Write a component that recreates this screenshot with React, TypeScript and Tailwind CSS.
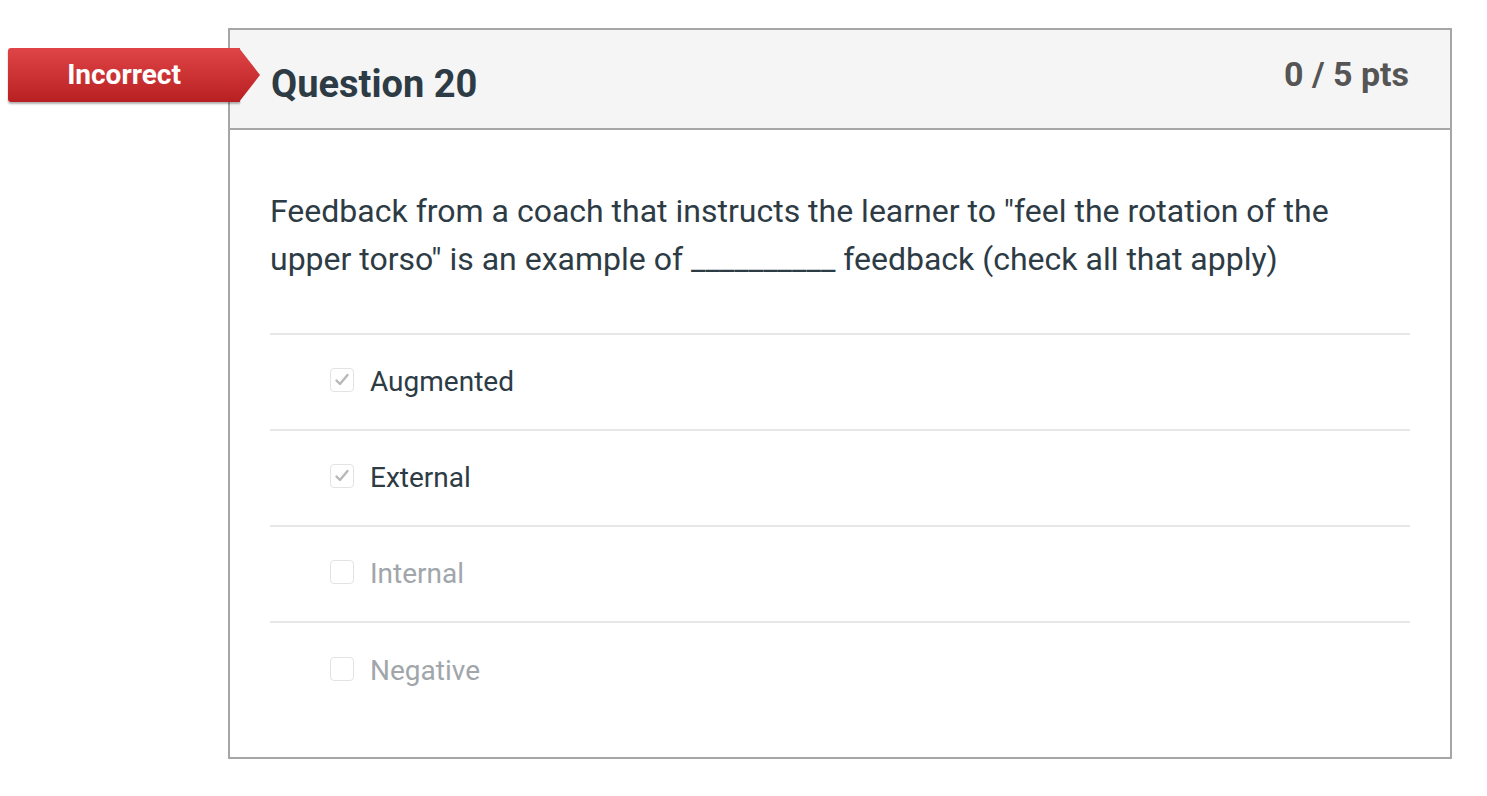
import React from "react";

const Check = () => (
  <svg width="20" height="20" viewBox="0 0 20 20" fill="none">
    <path d="M4.5 10.5 L8 14 L15.5 5" stroke="#b8b8b8" strokeWidth="2.4" strokeLinecap="round" strokeLinejoin="round" />
  </svg>
);

const Answer = ({ label, checked, last }: { label: string; checked: boolean; last?: boolean }) => (
  <div className={`flex h-[96px] items-center pl-[60px] ${last ? "" : "border-b-2 border-[#e6e6e6]"}`}>
    <div className="-mt-[4px] flex h-[24px] w-[24px] items-center justify-center rounded-[4px] border border-[#e3e3e3] bg-white">
      {checked ? <Check /> : null}
    </div>
    <span className={`ml-[16px] text-[28px] ${checked ? "text-[#2d3b45]" : "text-[#a0a6aa]"}`}>{label}</span>
  </div>
);

export default function App() {
  return (
    <div className="min-h-[796px] w-[1487px] bg-white" style={{ fontFamily: "Roboto, 'Liberation Sans', sans-serif" }}>
      <div className="relative pl-[228px] pt-[28px]">
        <div className="absolute left-[8px] top-[48px] z-10 flex h-[54px] items-center">
          <div className="flex h-[54px] w-[232px] items-center justify-center rounded-l-[3px] bg-gradient-to-b from-[#e04446] to-[#b81f22] shadow-[0_2px_2px_rgba(0,0,0,0.3)]">
            <span className="text-[28px] font-bold text-white">Incorrect</span>
          </div>
          <svg width="21" height="54" viewBox="0 0 21 54" className="-ml-px">
            <defs>
              <linearGradient id="g" x1="0" y1="0" x2="0" y2="1">
                <stop offset="0" stopColor="#e04446" />
                <stop offset="1" stopColor="#b81f22" />
              </linearGradient>
            </defs>
            <polygon points="0,0 0,54 21,27" fill="url(#g)" />
          </svg>
        </div>
        <div className="w-[1224px] border-2 border-[#a6a6a6]">
          <div className="flex h-[100px] items-start justify-between border-b-2 border-[#a6a6a6] bg-[#f5f5f5] pl-[41px] pr-[41px]">
            <span className="mt-[30px] text-[38px] font-bold leading-[48px] text-[#2d3b45]">Question 20</span>
            <span className="mt-[22px] text-[34px] font-bold leading-[44px] text-[#555555]">0 / 5 pts</span>
          </div>
          <div className="px-[40px] pt-[57px] pb-[38px]">
            <p className="text-[32px] leading-[48px] text-[#2d3b45]">
              Feedback from a coach that instructs the learner to "feel the rotation of the upper torso" is an example of __________ feedback (check all that apply)
            </p>
            <div className="mt-[50px] border-t-2 border-[#e6e6e6]">
              <Answer label="Augmented" checked />
              <Answer label="External" checked />
              <Answer label="Internal" checked={false} />
              <Answer label="Negative" checked={false} last />
            </div>
          </div>
        </div>
      </div>
    </div>
  );
}
